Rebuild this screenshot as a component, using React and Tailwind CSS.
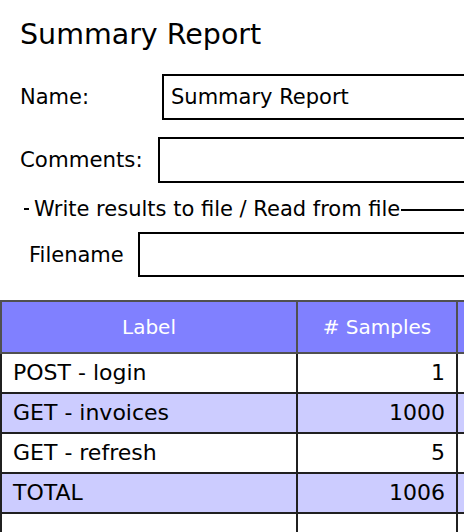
import React from "react";

const rows = [
  { label: "POST - login", samples: "1", alt: false },
  { label: "GET - invoices", samples: "1000", alt: true },
  { label: "GET - refresh", samples: "5", alt: false },
  { label: "TOTAL", samples: "1006", alt: true },
  { label: "", samples: "", alt: false },
];

export default function App() {
  return (
    <div className="w-[464px] h-[532px] overflow-hidden bg-white text-black font-['DejaVu_Sans',sans-serif]">
      <div className="pt-[21px] pl-[20px] text-[28.5px] leading-[28px] whitespace-nowrap">Summary Report</div>

      <div className="mt-[25px] flex items-center whitespace-nowrap">
        <div className="w-[162px] pl-[20px] text-[21px] leading-[24px] shrink-0">Name:</div>
        <div className="w-[340px] h-[46px] shrink-0 border-2 border-black flex items-center pl-[7px] text-[21px] leading-[24px]">
          Summary Report
        </div>
      </div>

      <div className="mt-[17px] flex items-center whitespace-nowrap">
        <div className="w-[158px] pl-[20px] text-[21.3px] leading-[24px] shrink-0">Comments:</div>
        <div className="w-[340px] h-[46px] shrink-0 border-2 border-black"></div>
      </div>

      <div className="mt-[14px] flex items-center whitespace-nowrap text-[21px] leading-[24px]">
        <div className="ml-[24px] w-[5px] h-[2px] bg-black shrink-0"></div>
        <div className="ml-[5px] shrink-0">Write results to file / Read from file</div>
        <div className="ml-[1px] flex-1 h-[2px] bg-black translate-y-[1px]"></div>
      </div>

      <div className="mt-[11px] flex items-center whitespace-nowrap">
        <div className="w-[138px] pl-[29px] text-[21px] leading-[24px] shrink-0">Filename</div>
        <div className="w-[340px] h-[45px] shrink-0 border-2 border-black"></div>
      </div>

      <div className="mt-[23px] w-[620px]">
        <div className="flex h-[54px] bg-[#8080ff] text-white text-[20px] leading-[24px] border-t-2 border-b-2 border-l-2 border-[#505050]">
          <div className="w-[296px] shrink-0 flex items-center justify-center border-r-2 border-[#505050]">Label</div>
          <div className="w-[160px] shrink-0 flex items-center justify-center border-r-2 border-[#505050]"># Samples</div>
          <div className="flex-1"></div>
        </div>
        {rows.map((r, i) => (
          <div
            key={i}
            className={`flex h-[40px] text-[22px] leading-[24px] border-b-2 border-l-2 border-[#202020] ${r.alt ? "bg-[#ccccff]" : "bg-white"}`}
          >
            <div className="w-[296px] shrink-0 flex items-center pl-[11px] border-r-2 border-[#202020] whitespace-nowrap">{r.label}</div>
            <div className="w-[160px] shrink-0 flex items-center justify-end pr-[11px] border-r-2 border-[#202020]">{r.samples}</div>
            <div className="flex-1"></div>
          </div>
        ))}
      </div>
    </div>
  );
}
